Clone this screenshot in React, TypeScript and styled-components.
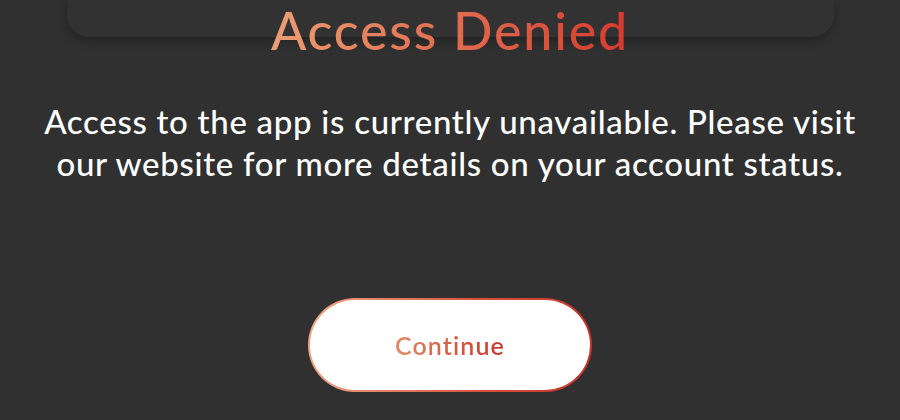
import React from 'react';
import styled, { createGlobalStyle } from 'styled-components';

const GlobalStyle = createGlobalStyle`
  html, body {
    margin: 0;
    padding: 0;
    background: #303030;
  }
  body {
    font-family: Lato, "Open Sans", sans-serif;
    -webkit-font-smoothing: antialiased;
  }
`;

const Screen = styled.main`
  width: 900px;
  height: 420px;
  overflow: hidden;
  display: flex;
  flex-direction: column;
  align-items: center;
  background: #303030;
`;

/* top card, mostly scrolled out of view */
const TopCard = styled.div`
  width: 767px;
  height: 37px;
  flex: 0 0 auto;
  margin-bottom: -37px;
  background: #323232;
  border-radius: 0 0 22px 22px;
  box-shadow: 0 4px 10px rgba(0, 0, 0, 0.28);
`;

const Title = styled.h1`
  position: relative;
  margin: 0;
  font-size: 52px;
  line-height: 60px;
  font-weight: 500;
  letter-spacing: 1.8px;
  background: linear-gradient(90deg, #eb9d74 0%, #e0684d 55%, #d53a2e 100%);
  -webkit-background-clip: text;
  background-clip: text;
  color: transparent;
`;

const Message = styled.p`
  margin: 40px 0 0;
  font-size: 33px;
  line-height: 42px;
  font-weight: 500;
  letter-spacing: 0.7px;
  color: #ffffff;
  text-align: center;
  white-space: nowrap;
`;

const ContinueButton = styled.button.attrs({ type: 'button' })`
  margin-top: 114px;
  width: 284px;
  height: 94px;
  flex: 0 0 auto;
  padding: 0;
  border: 2px solid transparent;
  border-radius: 47px;
  background:
    linear-gradient(#ffffff, #ffffff) padding-box,
    linear-gradient(90deg, #f0a786 0%, #d9513d 60%, #c7332b 100%) border-box;
  display: flex;
  align-items: center;
  justify-content: center;
  cursor: pointer;
`;

const ButtonLabel = styled.span`
  font-family: Lato, "Open Sans", sans-serif;
  font-size: 25px;
  font-weight: 600;
  letter-spacing: 1.1px;
  background: linear-gradient(90deg, #e08a68 0%, #d45a45 55%, #c8372e 100%);
  -webkit-background-clip: text;
  background-clip: text;
  color: transparent;
`;

export default function App() {
  return (
    <>
      <GlobalStyle />
      <Screen>
        <TopCard />
        <Title>Access Denied</Title>
        <Message>
          Access to the app is currently unavailable. Please visit
          <br />
          our website for more details on your account status.
        </Message>
        <ContinueButton>
          <ButtonLabel>Continue</ButtonLabel>
        </ContinueButton>
      </Screen>
    </>
  );
}
